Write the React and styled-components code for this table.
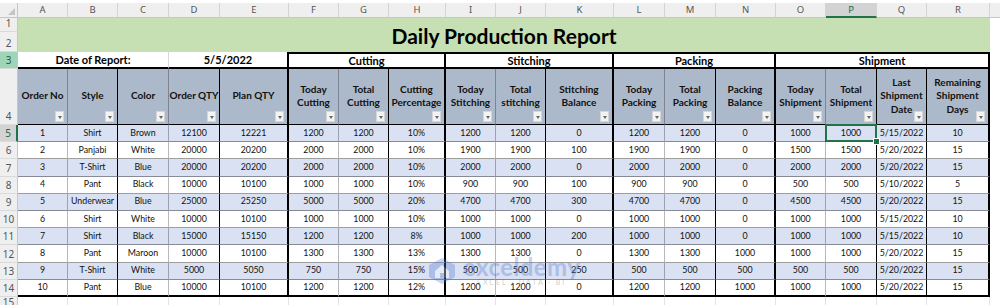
import React from "react";
import styled, { createGlobalStyle } from "styled-components";

const COLS = [50, 50, 51, 51, 69, 50, 50, 57, 50, 50, 68, 51, 51, 60, 50, 51, 50, 63];
const LETTERS = "ABCDEFGHIJKLMNOPQR".split("");
const EDGE = ["g", "k", "g", "k", "t", "g", "k", "t", "g", "k", "t", "g", "k", "t", "g", "k", "k", "t"];
const ACTIVE_COL = 15;

const edge = (k) =>
  k === "t" ? "2px solid #000" : k === "k" ? "1px solid #000" : "1px solid rgba(0,0,0,0.28)";

const HEADERS = [
  "Order No", "Style", "Color", "Order QTY", "Plan QTY",
  "Today\nCutting", "Total\nCutting", "Cutting\nPercentage",
  "Today\nStitching", "Total\nstitching", "Stitching\nBalance",
  "Today\nPacking", "Total\nPacking", "Packing\nBalance",
  "Today\nShipment", "Total\nShipment", "Last\nShipment\nDate", "Remaining\nShipment\nDays",
];

const ROWS = [
  [1, "Shirt", "Brown", 12100, 12221, 1200, 1200, "10%", 1200, 1200, 0, 1200, 1200, 0, 1000, 1000, "5/15/2022", 10],
  [2, "Panjabi", "White", 20000, 20200, 2000, 2000, "10%", 1900, 1900, 100, 1900, 1900, 0, 1500, 1500, "5/20/2022", 15],
  [3, "T-Shirt", "Blue", 20000, 20200, 2000, 2000, "10%", 2000, 2000, 0, 2000, 2000, 0, 2000, 2000, "5/20/2022", 15],
  [4, "Pant", "Black", 10000, 10100, 1000, 1000, "10%", 900, 900, 100, 900, 900, 0, 500, 500, "5/10/2022", 5],
  [5, "Underwear", "Blue", 25000, 25250, 5000, 5000, "20%", 4700, 4700, 300, 4700, 4700, 0, 4500, 4500, "5/20/2022", 15],
  [6, "Shirt", "White", 10000, 10100, 1000, 1000, "10%", 1000, 1000, 0, 1000, 1000, 0, 1000, 1000, "5/15/2022", 10],
  [7, "Shirt", "Black", 15000, 15150, 1200, 1200, "8%", 1000, 1000, 200, 1000, 1000, 0, 1000, 1000, "5/15/2022", 10],
  [8, "Pant", "Maroon", 10000, 10100, 1300, 1300, "13%", 1300, 1300, 0, 1300, 1300, 1000, 1000, 1000, "5/20/2022", 15],
  [9, "T-Shirt", "White", 5000, 5050, 750, 750, "15%", 500, 500, 250, 500, 500, 500, 500, 500, "5/20/2022", 15],
  [10, "Pant", "Blue", 10000, 10100, 1200, 1200, "12%", 1200, 1200, 0, 1200, 1200, 1000, 1000, 1000, "5/20/2022", 15],
];

const GROUPS = [
  { label: "Date of Report:", span: 3, top: false, right: "1px solid #d9d9d9" },
  { label: "5/5/2022", span: 2, top: false, right: "2px solid #000" },
  { label: "Cutting", span: 3, top: true, right: "2px solid #000" },
  { label: "Stitching", span: 3, top: true, right: "2px solid #000" },
  { label: "Packing", span: 3, top: true, right: "2px solid #000" },
  { label: "Shipment", span: 4, top: true, right: "2px solid #000" },
];

const GlobalStyle = createGlobalStyle`
  html, body { margin: 0; padding: 0; background: #fff; }
  body { overflow: hidden; font-family: Lato, "Noto Sans", sans-serif; }
`;

const Sheet = styled.div`
  position: relative;
  width: 1000px;
  height: 305px;
  box-sizing: border-box;
  padding-top: 3px;
  background: #fff;
  display: grid;
  grid-template-columns: 18px ${COLS.map((w) => w + "px").join(" ")} 1fr;
  grid-template-rows: 15px 14px 20px 17px 56px repeat(10, 17.2px) 1fr;
  overflow: hidden;
  & > * { box-sizing: border-box; min-width: 0; }
`;

const Corner = styled.div`
  background: #efefef;
  border-right: 1px solid #c6c6c6;
  border-bottom: 1px solid #c6c6c6;
  display: flex;
  align-items: flex-end;
  justify-content: flex-end;
  padding: 0 2px 2px 0;
`;

const ColHead = styled.div`
  background: ${(p) => (p.$active ? "#d3d3d3" : "#efefef")};
  border-right: 1px solid #d4d4d4;
  border-bottom: ${(p) => (p.$active ? "2px solid #217346" : "1px solid #c6c6c6")};
  color: ${(p) => (p.$active ? "#1f6b43" : "#555")};
  font: 9.5px/1 "Noto Sans", sans-serif;
  display: flex;
  align-items: center;
  justify-content: center;
`;

const HeadFill = styled.div`
  background: #efefef;
  border-bottom: 1px solid #c6c6c6;
`;

const RowHead = styled.div`
  background: ${(p) => (p.$state === "sel" ? "#d3d3d3" : p.$state === "green" ? "#9fd5b7" : "#efefef")};
  border-right: ${(p) => (p.$state === "sel" ? "2px solid #217346" : "1px solid #c6c6c6")};
  border-bottom: 1px solid #dadada;
  color: ${(p) => (p.$state === "sel" ? "#1f6b43" : p.$state === "green" ? "#2d5a40" : "#555")};
  font: 10px/11px "Noto Sans", sans-serif;
  display: flex;
  align-items: flex-end;
  justify-content: center;
  padding-bottom: 2px;
`;

const Title = styled.div`
  grid-column: span 18;
  grid-row: span 2;
  background: #c6e0b4;
  display: flex;
  align-items: center;
  justify-content: center;
  font: 700 21px/1 Lato, sans-serif;
  color: #000;
  padding-top: 1px;
`;

const TallFill = styled.div`
  grid-row: span 2;
  background: #fff;
`;

const Fill = styled.div`
  background: #fff;
`;

const GroupCell = styled.div`
  grid-column: span ${(p) => p.$span};
  background: #fff;
  border-top: ${(p) => (p.$top ? "2px solid #000" : "none")};
  border-right: ${(p) => p.$right};
  border-bottom: 2px solid #000;
  display: flex;
  align-items: center;
  justify-content: center;
  font: 700 11px/1 Lato, sans-serif;
  color: #000;
`;

const HeadCell = styled.div`
  position: relative;
  background: #acb9ca;
  border-right: ${(p) => edge(p.$edge)};
  border-bottom: 1px solid #000;
  display: flex;
  align-items: center;
  justify-content: center;
  text-align: center;
  white-space: pre;
  font: 700 10px/13.4px Lato, sans-serif;
  color: #111;
  padding-bottom: 1px;
`;

const FilterBtn = styled.span`
  position: absolute;
  right: 3px;
  bottom: 2px;
  width: 9px;
  height: 11px;
  background: #f3f3f3;
  box-shadow: inset 0 0 0 1px #d6d6d6;
  display: flex;
  align-items: center;
  justify-content: center;
  &::after {
    content: "";
    border-left: 2.5px solid transparent;
    border-right: 2.5px solid transparent;
    border-top: 3px solid #666;
    margin-top: 1px;
  }
`;

const DataCell = styled.div`
  position: relative;
  background: ${(p) => (p.$band ? "#d9e1f2" : "#fff")};
  border-right: ${(p) => edge(p.$edge)};
  border-bottom: ${(p) => (p.$last ? "2px solid #000" : "1px solid rgba(0,0,0,0.38)")};
  display: flex;
  align-items: center;
  justify-content: center;
  font: 400 8.8px/1 Lato, sans-serif;
  color: #111;
  white-space: nowrap;
  ${(p) =>
    p.$selected &&
    `
    &::after {
      content: "";
      position: absolute;
      left: -1px; top: -1px; right: -1px; bottom: -1px;
      border: 2px solid #217346;
      z-index: 2;
    }
    &::before {
      content: "";
      position: absolute;
      right: -4px; bottom: -4px;
      width: 5px; height: 5px;
      background: #217346;
      border: 1px solid #fff;
      z-index: 3;
    }
  `}
`;

const BlankCell = styled.div`
  background: #fff;
  border-right: 1px solid #e2e2e2;
`;

const Watermark = styled.div`
  position: absolute;
  left: 427px;
  top: 256px;
  display: flex;
  align-items: center;
  gap: 6px;
  opacity: 0.32;
  pointer-events: none;
  z-index: 4;
`;

const MarkText = styled.div`
  display: flex;
  flex-direction: column;
  align-items: center;
`;

const MarkName = styled.span`
  font: 700 24px/22px Lato, sans-serif;
  color: #4d78d6;
  letter-spacing: 0.4px;
`;

const MarkSub = styled.span`
  font: 400 7px/8px Lato, sans-serif;
  color: #6a6a6a;
  letter-spacing: 2px;
`;

const Logo = () => (
  <svg width="30" height="28" viewBox="0 0 30 28">
    <path d="M15 1 L28 8 L28 20 L15 27 L2 20 L2 8 Z" fill="#4d78d6" />
    <path d="M8 14 L15 8 L22 14 L22 21 L8 21 Z" fill="#fff" />
    <rect x="13" y="16" width="4" height="5" fill="#4d78d6" />
  </svg>
);

const CornerMark = () => (
  <svg width="7" height="7" viewBox="0 0 7 7">
    <path d="M7 0 L7 7 L0 7 Z" fill="#c4c4c4" />
  </svg>
);

export default function App() {
  return (
    <>
      <GlobalStyle />
      <Sheet>
        <Corner>
          <CornerMark />
        </Corner>
        {LETTERS.map((l, i) => (
          <ColHead key={l} $active={i === ACTIVE_COL}>
            {l}
          </ColHead>
        ))}
        <HeadFill />

        <RowHead>1</RowHead>
        <Title>Daily Production Report</Title>
        <TallFill />
        <RowHead>2</RowHead>

        <RowHead $state="green">3</RowHead>
        {GROUPS.map((g) => (
          <GroupCell key={g.label} $span={g.span} $top={g.top} $right={g.right}>
            {g.label}
          </GroupCell>
        ))}
        <Fill />

        <RowHead>4</RowHead>
        {HEADERS.map((h, i) => (
          <HeadCell key={h} $edge={EDGE[i]}>
            {h}
            <FilterBtn />
          </HeadCell>
        ))}
        <Fill />

        {ROWS.map((row, r) => (
          <React.Fragment key={r}>
            <RowHead $state={r === 0 ? "sel" : undefined}>{r + 5}</RowHead>
            {row.map((v, c) => (
              <DataCell
                key={c}
                $edge={EDGE[c]}
                $band={r % 2 === 0}
                $last={r === ROWS.length - 1}
                $selected={r === 0 && c === ACTIVE_COL}
              >
                {v}
              </DataCell>
            ))}
            <Fill />
          </React.Fragment>
        ))}

        <RowHead>15</RowHead>
        {LETTERS.map((l) => (
          <BlankCell key={l} />
        ))}
        <Fill />

        <Watermark>
          <Logo />
          <MarkText>
            <MarkName>exceldemy</MarkName>
            <MarkSub>EXCEL · DATA · BI</MarkSub>
          </MarkText>
        </Watermark>
      </Sheet>
    </>
  );
}
